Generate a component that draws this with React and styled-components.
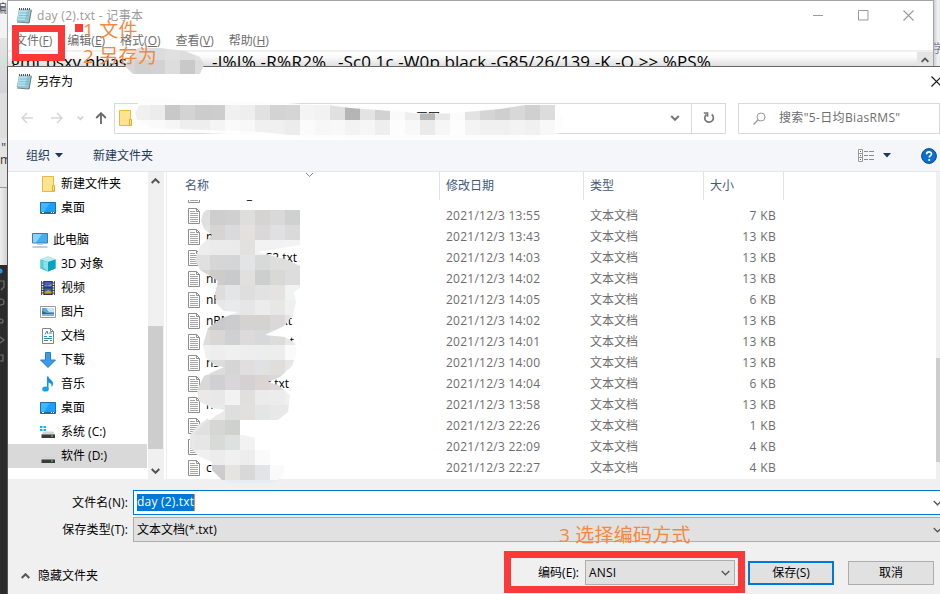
import React from 'react';
import styled, { createGlobalStyle } from 'styled-components';

const Global = createGlobalStyle`
  * { box-sizing: border-box; }
  body { margin: 0; overflow: hidden; }
  svg { display: block; flex: none; }
`;

const Desktop = styled.div`
  position: relative;
  width: 940px;
  height: 594px;
  overflow: hidden;
  background: #f4f4f6;
  color: #000;
  font: 12px/16px 'Open Sans', 'Noto Sans CJK SC', sans-serif;
  white-space: pre;
`;

/* Slices of the windows lying further back */
const BackStrip = styled.div`
  position: absolute;
  left: 0;
  top: 0;
  width: 8px;
  height: 594px;
  display: flex;
  flex-direction: column;
  overflow: hidden;
`;
const StripPart = styled.div`
  height: ${(p) => p.$h}px;
  flex: none;
  background: ${(p) => p.$bg};
  color: ${(p) => p.$color || '#555'};
  overflow: hidden;
  text-indent: -5px;
  padding-top: ${(p) => p.$pt || 0}px;
  line-height: ${(p) => p.$lh || 16}px;
  border-bottom: ${(p) => (p.$line ? `1px solid ${p.$line}` : '0')};
`;
const RightStrip = styled.div`
  position: absolute;
  right: 0;
  top: 0;
  width: 8px;
  height: 67px;
  padding-top: 41px;
  background: linear-gradient(90deg, #bcbcbe, #eef0f4 70%);
  color: #7f7f9e;
  overflow: hidden;
`;

/* Notepad */
const Notepad = styled.section`
  position: absolute;
  left: 7px;
  top: 0;
  width: 927px;
  height: 67px;
  background: #fff;
  border: 1px solid #a5a5a5;
  border-bottom: 0;
  overflow: hidden;
`;
const NotepadTitle = styled.header`
  height: 29px;
  display: flex;
  align-items: center;
  padding: 0 19px 0 8px;
  color: #9a9a9a;
  gap: 5px;
`;
const TitleText = styled.span`
  flex: 1;
  letter-spacing: ${(p) => p.$ls || 0}px;
`;
const WinButtons = styled.div`
  display: flex;
  gap: 34.500px;
`;
const MenuBar = styled.nav`
  height: 20px;
  display: flex;
  padding: 3px 0 0 7px;
  gap: 15px;
  color: #6d6d6d;
`;
const Key = styled.u`
  text-underline-offset: 1px;
`;
const Editor = styled.div`
  height: 18px;
  border-top: 2px solid #f0f0f0;
  display: flex;
  justify-content: space-between;
  background: linear-gradient(#fff 0, #fbfbfb 30%, #d8d8d8 100%);
`;
const EditorLine = styled.div`
  display: flex;
  width: 800px;
  padding-left: 3px;
  font-size: 17px;
  line-height: 19px;
  height: 16px;
  overflow: hidden;
`;
const Chunk = styled.span`
  width: ${(p) => p.$w}px;
  flex: none;
  letter-spacing: ${(p) => p.$ls || 0}px;
`;
const ScrollCap = styled.div`
  width: 16px;
  display: flex;
  align-items: center;
  justify-content: center;
  background: #e4e4e4;
`;

/* Save dialog */
const Dialog = styled.section`
  position: absolute;
  left: 7px;
  top: 66px;
  width: 935px;
  height: 529px;
  display: flex;
  flex-direction: column;
  background: #fff;
  border-left: 1px solid #555;
  border-top: 1px solid #666;
`;
const DialogTitle = styled.header`
  height: 29px;
  display: flex;
  align-items: center;
  padding: 0 0 0 8px;
  gap: 5px;
`;
const NavBar = styled.div`
  height: 44px;
  display: flex;
  align-items: center;
  padding: 0 2px 0 12px;
  flex: none;
`;
const Arrows = styled.div`
  width: 94px;
  display: flex;
  align-items: center;
`;
const AddressBox = styled.div`
  width: 612px;
  height: 31px;
  display: flex;
  align-items: center;
  border: 1px solid #d9d9d9;
  padding-left: 2px;
`;
const AddressText = styled.span`
  flex: 1;
  padding-left: 283px;
`;
const Refresh = styled.div`
  width: 34px;
  height: 29px;
  margin-left: 11px;
  display: flex;
  align-items: center;
  justify-content: center;
  border-left: 1px solid #d9d9d9;
`;
const SearchBox = styled.div`
  flex: 1;
  height: 31px;
  margin-left: 12px;
  display: flex;
  align-items: center;
  gap: 13px;
  padding-left: 14px;
  border: 1px solid #d9d9d9;
  color: #6d6d6d;
  letter-spacing: 0.35px;
`;
const Toolbar = styled.div`
  height: 32px;
  flex: none;
  display: flex;
  align-items: center;
  padding: 0 5px 0 18px;
  background: #f4f6f9;
  border-bottom: 1px solid #e5e7ea;
  color: #1e395b;
`;
const ToolItem = styled.span`
  display: flex;
  align-items: center;
  gap: ${(p) => p.$gap || 5}px;
  margin-right: ${(p) => p.$mr || 0}px;
`;
const Spacer = styled.div`
  flex: 1;
`;
const Main = styled.div`
  height: 307px;
  flex: none;
  display: flex;
`;
const Sidebar = styled.aside`
  width: 139px;
  overflow: hidden;
`;
const TreeRow = styled.div`
  height: 24px;
  display: flex;
  align-items: center;
  gap: 5px;
  padding-left: ${(p) => (p.$root ? 24 : 32)}px;
  margin-top: ${(p) => (p.$root ? 8 : 0)}px;
  background: ${(p) => (p.$active ? '#d9d9d9' : 'transparent')};
`;
const ScrollBar = styled.div`
  width: 16px;
  margin-left: 1px;
  display: flex;
  flex-direction: column;
  align-items: center;
  justify-content: space-between;
  padding: 6px 1px 5px 0;
  background: #f0f0f0;
`;
const Thumb = styled.div`
  width: 15px;
  height: 123px;
  margin-top: auto;
  margin-bottom: 19px;
  background: #cdcdcd;
`;
const List = styled.div`
  width: 770px;
  margin-left: 2px;
  border-left: 1px solid #ededed;
  overflow: hidden;
`;
const columns = '273px 144px 120px 80px';
const ListHead = styled.div`
  display: grid;
  grid-template-columns: ${columns};
  height: 28px;
  line-height: 27px;
  color: #43597a;
`;
const HeadCell = styled.div`
  padding-left: ${(p) => p.$pl || 6}px;
  border-right: 1px solid #e3e3e3;
`;
const Rows = styled.div`
  height: 279px;
  overflow: hidden;
  display: flex;
  flex-direction: column;
  justify-content: flex-end;
  padding-bottom: 1px;
`;
const FileRow = styled.div`
  display: grid;
  grid-template-columns: ${columns};
  height: 21px;
  flex: none;
  align-items: center;
  color: #6d6d6d;
`;
const NameCell = styled.div`
  display: flex;
  align-items: center;
  gap: 6px;
  padding-left: 21px;
  color: #000;
`;
const NameTail = styled.span`
  margin-left: auto;
  margin-right: ${(p) => p.$r}px;
`;
const Cell = styled.div`
  padding-left: 6px;
  letter-spacing: ${(p) => p.$ls || 0}px;
  text-align: ${(p) => (p.$right ? 'right' : 'left')};
  padding-right: ${(p) => (p.$right ? 8 : 0)}px;
`;
const ListScroll = styled.div`
  width: 6px;
  background: #f0f0f0;
  padding-top: 186px;
`;
const ListThumb = styled.div`
  height: 104px;
  background: #cdcdcd;
`;
const Footer = styled.footer`
  flex: 1;
  display: flex;
  flex-direction: column;
  padding-top: 11px;
  background: #f0f0f0;
`;
const Field = styled.div`
  display: flex;
  align-items: center;
  height: 25px;
  margin-bottom: 2px;
`;
const FieldLabel = styled.span`
  width: 120px;
  text-align: right;
  margin-right: 5px;
  letter-spacing: 0.1px;
`;
const Input = styled.div`
  flex: 1;
  height: 25px;
  display: flex;
  align-items: center;
  justify-content: space-between;
  padding: 0 0 0 3px;
  background: ${(p) => (p.$focus ? '#fff' : '#e1e1e1')};
  border: 1px solid ${(p) => (p.$focus ? '#0078d7' : '#adadad')};
  border-right: 0;
`;
const Selected = styled.span`
  height: 17px;
  background: #0078d7;
  color: #fff;
  border-right: 1px solid #ff8728;
  letter-spacing: 0.2px;
`;
const Actions = styled.div`
  display: flex;
  align-items: center;
  height: 42px;
  margin-top: 7px;
  padding-left: 13px;
`;
const HideFolders = styled.div`
  display: flex;
  align-items: center;
  gap: 8px;
  width: 483px;
  padding-top: 8px;
`;
const EncodingFrame = styled.div`
  width: 241px;
  height: 42px;
  border: 7px solid #fd3838;
  display: flex;
  align-items: center;
  justify-content: flex-end;
  padding: 1px 3px 0 0;
  gap: 6px;
`;
const Select = styled.div`
  width: 150px;
  height: 25px;
  display: flex;
  align-items: center;
  justify-content: space-between;
  padding: 0 4px 0 3px;
  background: #e1e1e1;
  border: 1px solid #adadad;
  letter-spacing: 0.2px;
`;
const Button = styled.button`
  width: 86px;
  height: 24px;
  margin: 1px 0 0 ${(p) => p.$ml}px;
  padding: 0;
  font: inherit;
  color: #000;
  background: #e1e1e1;
  border: ${(p) => (p.$primary ? '2px solid #0078d7' : '1px solid #adadad')};
`;

/* Marks drawn over the windows */
const Overlay = styled.svg`
  position: absolute;
  left: 0;
  top: 0;
`;
const Note = styled.div`
  position: absolute;
  left: ${(p) => p.$x}px;
  top: ${(p) => p.$y}px;
  font-size: 19px;
  line-height: 26px;
  letter-spacing: 0.25px;
  color: #f5883f;
`;
const RedBox = styled.div`
  position: absolute;
  left: 12px;
  top: 25px;
  width: 53px;
  height: 36px;
  border: 7px solid #fd3838;
`;
const RedDot = styled.div`
  position: absolute;
  left: 75px;
  top: 24px;
  width: 8px;
  height: 8px;
  background: #fd3838;
`;

const NotepadIcon = () => (
  <svg width="16" height="17" viewBox="0 0 16 17">
    <path d="M3 2.5h12.5L13.5 16 1 14.5z" fill="#c9b98c" />
    <path d="M3 2.5h11.5L12.5 15.5.5 14z" fill="#8cc6da" />
    <path d="M3.2 3.5h8L9 13 1.5 13z" fill="#b4e1ec" />
    <path d="M3.5 6h9.5M3 8.5h9.5M2.5 11h9.5" stroke="#6fb2c8" strokeWidth=".7" />
    <path d="M3 2h12" stroke="#555" strokeWidth="2" strokeDasharray="1 1" />
    <path d="M1 15l12 1 2.4-13" fill="none" stroke="#4f6570" strokeWidth=".8" />
  </svg>
);
const Chevron = ({ w = 9, up, color = '#555', sw = 1.3 }) => (
  <svg width={w} height="6" viewBox="0 0 9 6">
    <path d={up ? 'M.7 5 4.5 1.2 8.3 5' : 'M.7 1 4.5 4.8 8.3 1'} fill="none" stroke={color} strokeWidth={sw} />
  </svg>
);
const Cross = ({ color }) => (
  <svg width="11" height="11" viewBox="0 0 11 11">
    <path d="M.5.5l10 10M10.5.5l-10 10" stroke={color} strokeWidth="1.1" />
  </svg>
);
const Arrow = ({ dir }) => (
  <svg width="12" height="12" viewBox="0 0 12 12">
    {dir === 'up' ? (
      <path d="M6 12V1.5M1.2 6 6 1.2 10.8 6" fill="none" stroke="#666" strokeWidth="1.8" />
    ) : (
      <path
        d={dir === 'left' ? 'M12 6H1M6 1 1 6l5 5' : 'M0 6h11M6 1l5 5-5 5'}
        fill="none"
        stroke="#d6d6d6"
        strokeWidth="1.5"
      />
    )}
  </svg>
);
const Triangle = () => (
  <svg width="8" height="5" viewBox="0 0 8 5">
    <path d="M0 0h8L4 4.6z" fill="#1e395b" />
  </svg>
);
const Gap = styled.i`
  width: ${(p) => p.$w}px;
  flex: none;
`;

const iconArt = {
  folder: (
    <>
      <path d="M2.5.5h11v10h1v5h-12z" fill="#ffe48f" stroke="#e8b93e" />
      <path d="M12.5 15v-5.500h2V15z" fill="#ffe08a" stroke="#e3ae2c" />
    </>
  ),
  desktop: (
    <>
      <path d="M.5 2.500h15v11H.5z" fill="#1ba1fb" stroke="#1272b4" />
      <path d="M1 3h9L3 13H1z" fill="#43b6ff" />
      <path d="M1 12.500h14" stroke="#0d67a8" />
      <path d="M2 12.500h2M11 12.500h1M13 12.500h1" stroke="#fff" />
    </>
  ),
  pc: (
    <>
      <path d="M.5 1.500h15v9.500H.5z" fill="#42b0f5" stroke="#3b7ea9" />
      <path d="M1 2h9L4 10.500H1z" fill="#8bd3ff" />
      <path d="M5 12h6v1H5z" fill="#c5d2dc" />
      <path d="M.5 15h15" stroke="#8d9dab" />
    </>
  ),
  cube: (
    <>
      <path d="M8 .5l7.500 3v9L8 15.500.5 12.500v-9z" fill="#2bb9ce" />
      <path d="M8 .5l7.500 3L8 6 .5 3.500z" fill="#b8eef0" />
      <path d="M.5 3.500L8 6v9.500L.5 12.500z" fill="#57cdd9" />
      <path d="M3.500 5L8 6v9.500L3.500 11z" fill="#91e0e6" />
      <path d="M8 6l7.500-2.500v9L8 15.500z" fill="#08a2c4" />
    </>
  ),
  video: (
    <>
      <path d="M1 1h14v14H1z" fill="#39383c" />
      <path d="M2.500 1v14M13.500 1v14" stroke="#eee" strokeWidth="1.500" strokeDasharray="1.500 1" />
      <path d="M4.500 2h7v5h-7zM4.500 8.500h7v5h-7z" fill="#3569b8" />
      <path d="M4.500 5l3 1 4-2v2h-7zM4.500 12l4-2 3 2v1.500h-7z" fill="#c7a12e" />
    </>
  ),
  picture: (
    <>
      <path d="M.5 2.500h15v11H.5z" fill="#fff" stroke="#9b9b9b" />
      <path d="M2 4h12v8H2z" fill="#5fa8df" />
      <path d="M6 4h8v4H9z" fill="#c6e4f8" />
      <path d="M2 7l5 2 7 .5V10H2z" fill="#3b6d58" />
      <path d="M2 10h12v2H2z" fill="#85b4d4" />
    </>
  ),
  document: (
    <>
      <path d="M2.500.5h8l3 3v12h-11z" fill="#fff" stroke="#858585" />
      <path d="M10.500.5v3h3" fill="none" stroke="#858585" />
      <path d="M5 6.500 7 3l1 3M9 5h3M4 8.500h3M9 8.500h3M4 10.500h8" fill="none" stroke="#2c8ebb" />
      <path d="M4 12.500h4M10 12.500h2" stroke="#777" />
    </>
  ),
  download: <path d="M5.500.5h5V8h5L8 15.500.5 8h5z" fill="#3a9cec" stroke="#2c7cc4" />,
  music: (
    <>
      <path d="M7 .5h1.500c0 3 4.500 3.500 4.500 7 0 1.800-.8 2.800-1.500 3.500.5-3-1-4.200-3-4.500V13H7z" fill="#0d94e6" />
      <ellipse cx="5.500" cy="13" rx="3.300" ry="2.600" fill="#13a0f3" />
    </>
  ),
  drive: (
    <>
      <path d="M3.500 8.500h10L15 12H1.500z" fill="#d5d5d5" />
      <path d="M1.500 11.500H15V15H1.500z" fill="#3b3b3b" />
      <path d="M11 13h2" stroke="#57e34d" strokeWidth="1.200" />
    </>
  ),
  system: (
    <>
      <path d="M3.500 7.500h10L15 11H1.500z" fill="#d5d5d5" />
      <path d="M1.500 10.500H15V14H1.500z" fill="#3b3b3b" />
      <path d="M11 12h2" stroke="#57e34d" strokeWidth="1.200" />
      <path d="M0 2h2.500v2H0zM3.500 2H6v2H3.500zM0 5h2.500v2H0zM3.500 5H6v2H3.500z" fill="#10b1ea" />
    </>
  ),
};
const Icon = ({ name }) => (
  <svg width="16" height="16" viewBox="0 0 16 16">
    {iconArt[name]}
  </svg>
);
const FileIcon = () => (
  <svg width="12" height="16" viewBox="0 0 12 16">
    <path d="M.5.5h8l3 3v12H.5z" fill="#fff" stroke="#8e8e8e" />
    <path d="M8.500.5v3h3" fill="none" stroke="#8e8e8e" />
    <path d="M2 3.500h5M2 5.500h8M2 7.500h8M2 9.500h8M2 11.500h8M2 13.500h8" stroke="#a5a5a5" />
  </svg>
);
const ViewIcon = () => (
  <svg width="17" height="13" viewBox="0 0 17 13">
    <path d="M.5.500h4v12h-4zM.5 4.500h4M.5 8.500h4" fill="#fff" stroke="#999" />
    <path d="M6 2.500h4M11 2.500h5M6 6.500h4M11 6.500h5M6 10.500h4M11 10.500h5" stroke="#8c8c8c" />
    <path d="M2 2.500h1M2 6.500h1" stroke="#3a6ea5" />
    <path d="M2 10.500h1" stroke="#b33" />
  </svg>
);
const HelpIcon = () => (
  <svg width="16" height="16" viewBox="0 0 16 16">
    <circle cx="8" cy="8" r="7.400" fill="#0b6fd2" stroke="#0c4a87" />
    <path d="M5.600 6.200c0-3.200 4.900-3 4.900-.3 0 1.700-2.300 1.700-2.300 3.600" fill="none" stroke="#fff" strokeWidth="1.700" />
    <circle cx="8.200" cy="12" r="1.100" fill="#fff" />
  </svg>
);

const tree = [
  ['folder', '新建文件夹'],
  ['desktop', '桌面'],
  ['pc', '此电脑'],
  ['cube', '3D 对象'],
  ['video', '视频'],
  ['picture', '图片'],
  ['document', '文档'],
  ['download', '下载'],
  ['music', '音乐'],
  ['desktop', '桌面'],
  ['system', '系统 (C:)'],
  ['drive', '软件 (D:)'],
];

/* visible start of name, visible end, end offset, time, size */
const files = [
  ['', '_', 188, '3 13:55', '7 KB'],
  ['', '', 0, '3 13:55', '7 KB'],
  ['nr', '', 0, '3 13:43', '13 KB'],
  ['', 'AC2.txt', 143, '3 14:03', '13 KB'],
  ['nR', '', 0, '3 14:02', '13 KB'],
  ['nR', '', 0, '3 14:05', '6 KB'],
  ['nRMS', 'txt', 148, '3 14:02', '13 KB'],
  ['', 't', 146, '3 14:01', '13 KB'],
  ['ns', '', 0, '3 14:00', '13 KB'],
  ['', 'c.txt', 151, '3 14:04', '6 KB'],
  ['n', '', 0, '3 13:58', '13 KB'],
  ['l', '', 0, '3 22:26', '1 KB'],
  ['', '', 0, '3 22:09', '4 KB'],
  ['c', '', 0, '3 22:27', '4 KB'],
];

const fileMosaic = [
  'e0e0e0 cecece d0d0d0 dededc d5d4d3 dad9da cfd1d1',
  'e2e2e2 d6d5d4 dadadc e3e0de dad8d8 e0dfe2 dadada',
  'ededed eaebea eaeaea e3e1df f2f2f2 f2f2f2 f3f3f3',
  'e0e0e0 d6d6d6 d4d5d6 e3e4e5 d8dada dededa dedede',
  'd5d5d5 cecccb c9cacb e2e0de cdcfcf d8d8d5 dcdddc',
  'dfdfdf dfdddb e3e5e7 dedede e2e2e2 e5e3e1 f1f2f2',
  'e8e8e8 e8e8e8 e8ebec e6e6e6 ececec e7e7e5 f0f0f0',
  'd2d2d2 c9c9c9 cccccf d5d3d1 d5d3d1 dad8d8 e4e4e4',
  'dddddd dad6d6 cfd0d2 dcdada d6d8da dcdcda e8e8e9',
  'f0f0f0 eeeeee f0f0f0 eeeeee eceeed ededed fafafa',
  'e8e8e8 dcdcdc d6d5d6 e0dede dfe1e3 e0deda e6e6e6',
  'd8d8d8 d0d0d2 d8d6d8 d3d1d1 dad4d2 dad8d8 e4e4e4',
  'ebe9e7 e8e8e8 f2f2f2 e0dfdd ebebeb ececec f0f0f0',
  'eeeeee eaeaea dedede e1e0de e4e6e6 e8e8e8 e8e8e8',
  'e0e0e0 d6d6d4 cfd1ce ffffff ffffff ffffff ffffff',
  'e6e6e6 d8dad8 dde2e0 f2f2f2 ffffff ffffff ffffff',
  'f0f0f0 ececec f0f0f0 ededed fafafa fdfdfd ffffff',
  'dddddd cecccd e5e4e0 d8d8d8 e2e4e8 fafafa ffffff',
];
const addressMosaic = [
  'f0 ec c8 d3 cc cd f0 ee e1 d3 d5 f4 f2 e0 b5 e3 d2 fa ee b8 e8 fb e3 d5 cf d8 d0 dc',
  'fb fa f6 ee ee f4 fa f8 f0 f0 ec fb f7 f8 f3 f6 ee fd f8 ea f6 fd f4 f0 f0 f3 f0 f8',
];
const editorMosaic = ['e0 de dc e0 dd e2', 'd6 d0 d2 dd c9 dc'];

const Mosaic = ({ x, y, rows, clip }) => (
  <g clipPath={clip}>
    {rows.map((row, r) =>
      row.split(' ').map((c, i) => (
        <rect
          key={`${r}-${i}`}
          x={x + i * 15}
          y={y + r * 15}
          width="15"
          height="15"
          shapeRendering="crispEdges"
          fill={`#${c.length === 2 ? c + c + c : c}`}
        />
      ))
    )}
  </g>
);

export default function App() {
  return (
    <Desktop>
      <Global />
      <BackStrip>
        <StripPart $h={38} $bg="#f3f3f5" $pt={1}>编</StripPart>
        <StripPart $h={55} $bg="linear-gradient(#e4e4e4,#d4d4d8)" />
        <StripPart $h={45} $bg="#dedede" />
        <StripPart $h={50} $bg="#e4e4e4" $line="#999" $color="#333" $pt={4} $lh={12}>{'  "\nm'}</StripPart>
        <StripPart $h={77} $bg="linear-gradient(90deg,#eee,#cfcfcf)" />
        <StripPart $h={329} $bg="#2b2b2b">
          <svg width="8" height="160" viewBox="0 0 8 160">
            <circle cx="0" cy="6" r="2.500" fill="#2b94e0" />
            <g fill="none" stroke="#707070" strokeWidth="1.200">
              <path d="M-1 16h5v6l-3 3" />
              <circle cx="1" cy="37" r="3" />
              <circle cx="1" cy="56" r="2" />
              <path d="M0 72l4 3-4 3M-1 90h4v6h-4" />
            </g>
          </svg>
        </StripPart>
      </BackStrip>
      <RightStrip>学</RightStrip>

      <Notepad>
        <NotepadTitle>
          <NotepadIcon />
          <TitleText $ls={0.3}>day (2).txt - 记事本</TitleText>
          <WinButtons>
            <svg width="11" height="11" viewBox="0 0 11 11"><path d="M1 5.500h10" stroke="#999" /></svg>
            <svg width="11" height="11" viewBox="0 0 11 11"><path d="M.5.500h9.500v9.500H.5z" fill="none" stroke="#999" /></svg>
            <Cross color="#999" />
          </WinButtons>
        </NotepadTitle>
        <MenuBar>
          {[['文件', 'F'], ['编辑', 'E'], ['格式', 'O'], ['查看', 'V'], ['帮助', 'H']].map(([t, k]) => (
            <span key={k}>{t}(<Key>{k}</Key>)</span>
          ))}
        </MenuBar>
        <Editor>
          <EditorLine>
            <Chunk $w={201} $ls={-0.2}>gmt psxy nbias</Chunk>
            <Chunk $w={126} $ls={0.25}>-J%J% -R%R2%</Chunk>
            <Chunk $w={400} $ls={0.1}>-Sc0.1c -W0p.black -G85/26/139 -K -O &gt;&gt; %PS%</Chunk>
          </EditorLine>
          <ScrollCap><Chevron up sw={2} w={8} /></ScrollCap>
        </Editor>
      </Notepad>

      <Dialog>
        <DialogTitle>
          <NotepadIcon />
          <TitleText>另存为</TitleText>
          <Cross color="#111" />
        </DialogTitle>
        <NavBar>
          <Arrows>
            <Gap $w={1} />
            <Arrow dir="left" />
            <Gap $w={18} />
            <Arrow dir="right" />
            <Gap $w={14} />
            <Chevron w={7} color="#d0d0d0" sw={2} />
            <Gap $w={11} />
            <Arrow dir="up" />
          </Arrows>
          <AddressBox>
            <Icon name="folder" />
            <AddressText>画图</AddressText>
            <Chevron w={10} color="#777" sw={2} />
            <Refresh>
              <svg width="12" height="12" viewBox="0 0 12 12">
                <path d="M8.700 2.500A4.300 4.300 0 1 1 3.300 2.600M.8 1h3.700v3.700" fill="none" stroke="#777" strokeWidth="1.700" />
              </svg>
            </Refresh>
          </AddressBox>
          <SearchBox>
            <svg width="13" height="13" viewBox="0 0 13 13">
              <circle cx="8" cy="5" r="4" fill="none" stroke="#999" />
              <path d="M5 8 .5 12.500" stroke="#999" strokeWidth="1.200" />
            </svg>
            搜索"5-日均BiasRMS"
          </SearchBox>
        </NavBar>
        <Toolbar>
          <ToolItem $mr={30} $gap={5}>组织<Triangle /></ToolItem>
          <ToolItem>新建文件夹</ToolItem>
          <Spacer />
          <ToolItem $mr={30} $gap={8}><ViewIcon /><Triangle /></ToolItem>
          <HelpIcon />
        </Toolbar>
        <Main>
          <Sidebar>
            {tree.map(([icon, label], i) => (
              <TreeRow key={i} $root={icon === 'pc'} $active={icon === 'drive'}>
                <Icon name={icon} />
                {label}
              </TreeRow>
            ))}
          </Sidebar>
          <ScrollBar>
            <Chevron up sw={2} />
            <Thumb />
            <Chevron sw={2} />
          </ScrollBar>
          <List>
            <ListHead>
              <HeadCell $pl={18}>名称</HeadCell>
              <HeadCell>修改日期</HeadCell>
              <HeadCell>类型</HeadCell>
              <HeadCell>大小</HeadCell>
            </ListHead>
            <Rows>
              {files.map(([start, end, r, time, size], i) => (
                <FileRow key={i}>
                  <NameCell>
                    <FileIcon />
                    {start}
                    <NameTail $r={r}>{end}</NameTail>
                  </NameCell>
                  <Cell $ls={0.25}>2021/12/{time}</Cell>
                  <Cell>文本文档</Cell>
                  <Cell $right $ls={0.35}>{size}</Cell>
                </FileRow>
              ))}
            </Rows>
          </List>
          <ListScroll><ListThumb /></ListScroll>
        </Main>
        <Footer>
          <Field>
            <FieldLabel>文件名(N):</FieldLabel>
            <Input $focus><Selected>day (2).txt</Selected><Chevron /></Input>
          </Field>
          <Field>
            <FieldLabel>保存类型(T):</FieldLabel>
            <Input>文本文档(*.txt)<Chevron /></Input>
          </Field>
          <Actions>
            <HideFolders><Chevron up sw={2} /><span>隐藏文件夹</span></HideFolders>
            <EncodingFrame>
              编码(E):
              <Select>ANSI<Chevron /></Select>
            </EncodingFrame>
            <Button $primary $ml={3}>保存(S)</Button>
            <Button $ml={14}>取消</Button>
          </Actions>
        </Footer>
      </Dialog>

      <Overlay width="940" height="594" viewBox="0 0 940 594">
        <defs>
          <clipPath id="files">
            <path d="M210 206L203 213 201 221 204 229 212 235 200 246 195 260 200 270 218 281 215 293 216 303 224 311 238 312 222 318 208 328 203 345 206 358 216 366 224 367 204 376 197 390 199 401 212 408 225 410 205 423 193 434 190 445 198 456 212 462 212 470 222 480H278L284 474V465H270V450H255V438L240 434V420H278L288 412 290 395 278 385 268 382 280 377 292 366 297 352 295 343 285 337 265 335 284 326 293 315 296 302 294 292 300 288V266L288 260 258 252 300 245V210H210z" />
          </clipPath>
          <clipPath id="address">
            <path d="M140 105H327L350 108 405 112 416 113.500H450L500 109 525 105H555V135H290L262 132 150 128 137 120 135 112z" />
          </clipPath>
          <clipPath id="editor">
            <path d="M138 48H160L185 51 200 57 204 65 200 74H133L125 66 130 57z" />
          </clipPath>
        </defs>
        <path d="M138 101L145 98 160 97 185 100 263 101 300 104 350 106 405 111 416 113.500H450L500 107 530 104H556L564 120 560 133 520 139H350L290 136 199 133 160 130 138 122z" fill="#fdfdfd" />
        <Mosaic x={135} y={105} rows={addressMosaic} clip="url(#address)" />
        <path d="M190 435L198 425 208 418 212 440 200 456 190 448z" fill="#e8e8e8" />
        <path d="M220 479H284L270 483H230z" fill="#e6edf3" />
        <Mosaic x={195} y={210} rows={fileMosaic} clip="url(#files)" />
        <Mosaic x={120} y={45} rows={editorMosaic} clip="url(#editor)" />
        <path d="M306 173l3.500 3.500 3.500-3.500" fill="none" stroke="#888" />
      </Overlay>
      <RedBox />
      <RedDot />
      <Note $x={83} $y={17}>1 文件</Note>
      <Note $x={83} $y={43}>2 另存为</Note>
      <Note $x={559} $y={522}>3 选择编码方式</Note>
    </Desktop>
  );
}
